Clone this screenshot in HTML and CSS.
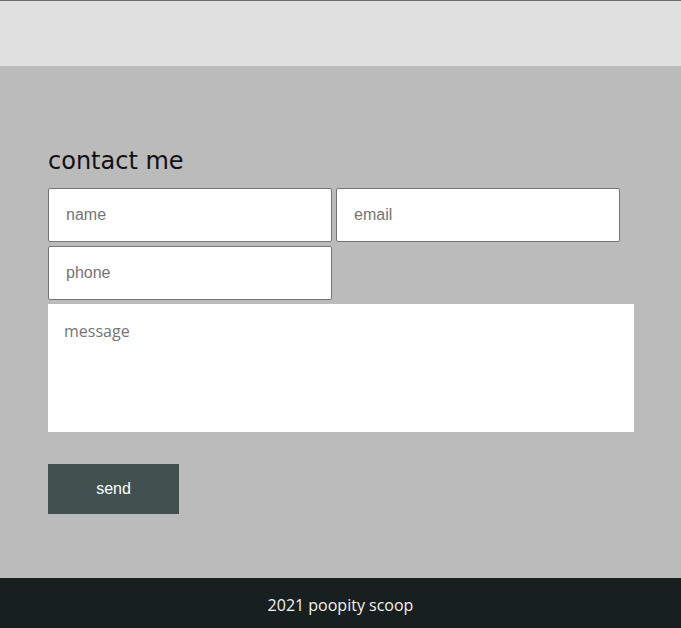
FILE: index.html
```html
<!DOCTYPE html>
<html lang="en">
<head>
    <meta charset="UTF-8">
    <meta name="viewport" content="width=device-width, initial-scale=1.0">
    <title>Contact</title>
    <link rel="stylesheet" href="styles.css">
</head>
<body>
    <header class="top-bar"></header>

    <main class="contact">
        <h1 class="contact-title">contact me</h1>
        <form class="contact-form">
            <div class="fields">
                <input type="text" class="field" placeholder="name">
                <input type="email" class="field" placeholder="email">
                <input type="tel" class="field" placeholder="phone">
                <textarea class="message" placeholder="message"></textarea>
            </div>
            <button type="button" class="send-btn">send</button>
        </form>
    </main>

    <footer class="footer">2021 poopity scoop</footer>
</body>
</html>
```

FILE: styles.css
```css
body {
    margin: 0;
    font-family: "Open Sans", sans-serif;
    background-color: #bbbbbb;
}

.top-bar {
    height: 65px;
    background-color: #e0e0e0;
    border-top: 1px solid #6b6b6b;
}

.contact {
    padding: 80px 47px 64px 48px;
}

.contact-title {
    margin: 0 0 12px;
    font-family: "DejaVu Sans", sans-serif;
    font-weight: normal;
    font-size: 24px;
    line-height: 30px;
    color: #111;
}

.fields {
    display: flex;
    flex-wrap: wrap;
    gap: 4px;
}

.field {
    box-sizing: border-box;
    width: 284px;
    height: 54px;
    margin: 0;
    padding: 0 17px;
    border: 1px solid #767676;
    border-radius: 2px;
    background: #fff;
    font-family: "Liberation Sans", Arial, sans-serif;
    font-size: 16px;
}

.message {
    box-sizing: border-box;
    width: 100%;
    height: 128px;
    margin: 0;
    padding: 16px 16px;
    border: none;
    background: #fff;
    font-family: "Open Sans", sans-serif;
    font-size: 16px;
    resize: none;
}

.send-btn {
    display: block;
    width: 131px;
    height: 50px;
    margin-top: 32px;
    border: none;
    background-color: #415150;
    color: #fff;
    font-family: "Liberation Sans", Arial, sans-serif;
    font-size: 16px;
    cursor: pointer;
}

.footer {
    box-sizing: border-box;
    height: 50px;
    padding-top: 4px;
    line-height: 46px;
    text-align: center;
    background-color: #171f1f;
    color: #f2f2f2;
    font-size: 16px;
}
```
